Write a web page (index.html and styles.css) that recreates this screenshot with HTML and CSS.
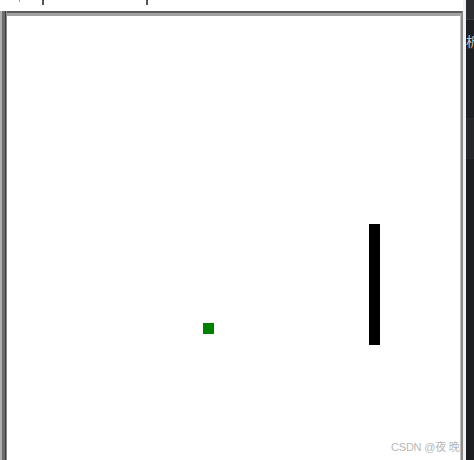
FILE: index.html
```html
<!DOCTYPE html>
<html>
<head>
<meta charset="utf-8">
<link rel="stylesheet" href="styles.css">
</head>
<body>
<div class="screen">
  <div class="main">
    <div class="titlestrip">
      <span class="mark m1"></span>
      <span class="mark m2"></span>
      <span class="mark m3"></span>
    </div>
    <div class="frame">
      <div class="edge-left"></div>
      <div class="window">
        <div class="canvas">
          <div class="paddle"></div>
          <div class="ball"></div>
          <div class="watermark">CSDN @夜 晚</div>
        </div>
      </div>
    </div>
  </div>
  <div class="gap"></div>
  <div class="side">
    <div class="side-top"></div>
    <div class="side-char">析</div>
    <div class="side-row r1"></div>
    <div class="side-row r2"></div>
    <div class="side-row r3"></div>
  </div>
</div>
</body>
</html>
```
FILE: styles.css
```css
* { box-sizing: border-box; }
html, body { margin: 0; padding: 0; background: #ffffff; }
body { font-family: "Liberation Sans", "Noto Sans CJK SC", sans-serif; }
.screen {
  display: flex;
  width: 474px;
  height: 460px;
  overflow: hidden;
}
.main {
  width: 463px;
  flex-shrink: 0;
  display: flex;
  flex-direction: column;
}
.titlestrip {
  height: 11px;
  background: #ffffff;
  position: relative;
}
.mark {
  position: absolute;
  top: 0;
  width: 2px;
  height: 4px;
  background: #9a9a9a;
}
.m1 { left: 19px; width: 1px; height: 2px; }
.m2 { left: 42px; height: 5px; background: #555; }
.m3 { left: 146px; height: 5px; background: #555; }
.frame {
  flex: 1;
  display: flex;
}
.edge-left {
  width: 7px;
  margin-top: -11px;
  background: linear-gradient(to right, #b0b0b0 0, #b0b0b0 2px, #6c6c6c 2px, #6c6c6c 5px, #3c3c3c 5px, #3c3c3c 6px, #8c8c8c 6px);
}
.window {
  flex: 1;
  border-top: 2px solid #5c5c5c;
  border-right: 2px solid #8a8a8a;
  display: flex;
  flex-direction: column;
}
.canvas {
  flex: 1;
  border-top: 3px solid #a2a2a2;
  border-right: 1px solid #bdbdbd;
  background: #ffffff;
  position: relative;
}
.paddle {
  position: absolute;
  left: 362px;
  top: 208px;
  width: 11px;
  height: 121px;
  background: #000000;
}
.ball {
  position: absolute;
  left: 196px;
  top: 307px;
  width: 11px;
  height: 11px;
  background: #008000;
}
.watermark {
  position: absolute;
  left: 384px;
  top: 422px;
  font-size: 11px;
  letter-spacing: -0.2px;
  color: #b8b8b8;
  white-space: nowrap;
}
.gap {
  width: 3px;
  flex-shrink: 0;
  background: #f2f2f2;
}
.side {
  flex: 1;
  min-width: 0;
  overflow: hidden;
  background: #1e1f22;
  display: flex;
  flex-direction: column;
}
.side-top {
  height: 20px;
  background: #2b2d30;
  border-bottom: 1px solid #3a3b3e;
}
.side-char {
  height: 28px;
  padding-top: 14px;
  font-size: 13px;
  color: #c8c8c8;
  line-height: 13px;
  white-space: nowrap;
  overflow: hidden;
  font-family: "Noto Sans CJK SC", sans-serif;
}
.side-row {
  border-top: 1px solid #2a2b2e;
}
.r1 { height: 70px; background: #1e1f22; }
.r2 { height: 40px; background: #25262a; }
.r3 { flex: 1; background: #1c1d20; }
```
